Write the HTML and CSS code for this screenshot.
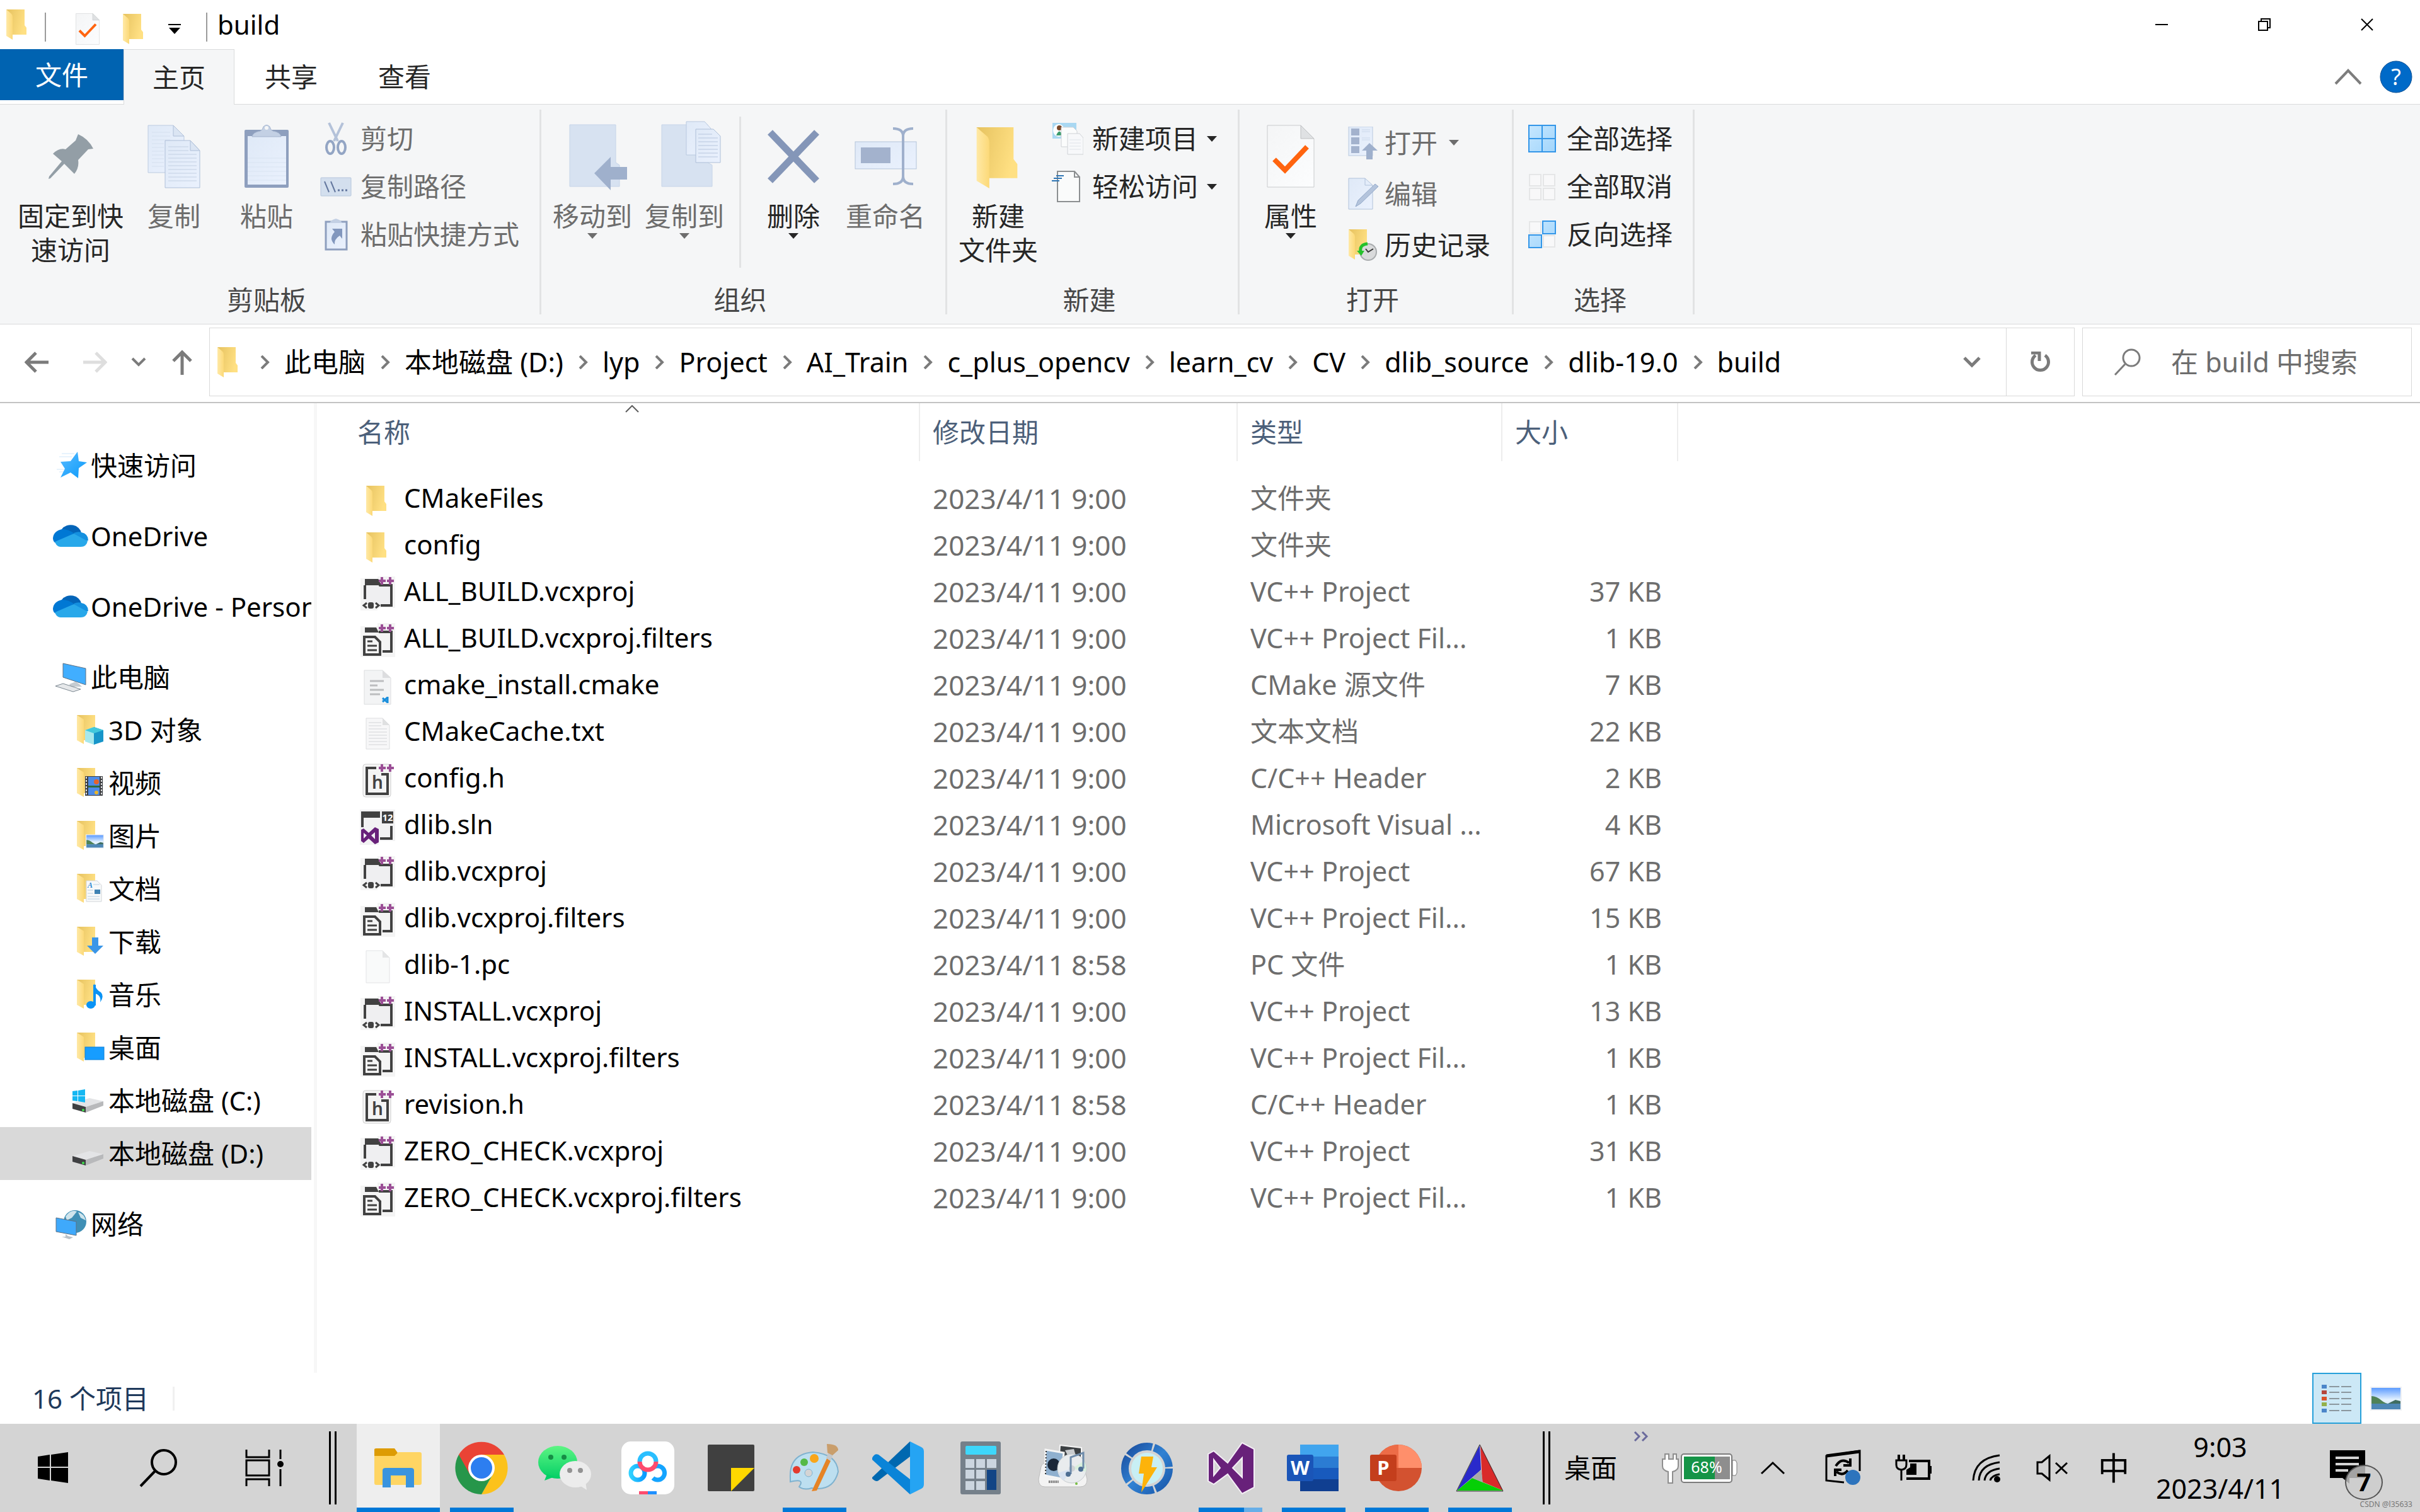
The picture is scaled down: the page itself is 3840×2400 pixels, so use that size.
FILE: index.html
```html
<!DOCTYPE html>
<html lang="zh-CN">
<head>
    <meta charset="UTF-8">
    <meta name="viewport" content="width=device-width, initial-scale=1.0">
    <title>build</title>
    <link rel="stylesheet" href="styles.css">
</head>
<body>
    <!-- shared icons -->
    <svg class="sprite" aria-hidden="true">
        <defs>
            <linearGradient id="g-folder" x1="0" y1="0" x2="1" y2="0.3">
                <stop offset="0" stop-color="#e6c25f"/><stop offset="1" stop-color="#ffe083"/>
            </linearGradient>
            <linearGradient id="g-leaf" x1="0" y1="0" x2="1" y2="0">
                <stop offset="0" stop-color="#ffe9a6"/><stop offset="1" stop-color="#fcd978"/>
            </linearGradient>
            <linearGradient id="g-paper" x1="0" y1="0" x2="1" y2="1">
                <stop offset="0" stop-color="#f4f5f6"/><stop offset="1" stop-color="#fcfdfe"/>
            </linearGradient>
            <linearGradient id="g-pale" x1="0" y1="0" x2="1" y2="1">
                <stop offset="0" stop-color="#dfe9f7"/><stop offset="1" stop-color="#eaf1fd"/>
            </linearGradient>
            <linearGradient id="g-sky" x1="0" y1="0" x2="0" y2="1">
                <stop offset="0" stop-color="#5c9bff"/><stop offset="0.55" stop-color="#e4f2ff"/><stop offset="1" stop-color="#cfe6f8"/>
            </linearGradient>
            <linearGradient id="g-blue" x1="0" y1="0" x2="1" y2="1">
                <stop offset="0" stop-color="#58baff"/><stop offset="1" stop-color="#0a9bfb"/>
            </linearGradient>
            <linearGradient id="g-cell" x1="0" y1="0" x2="1" y2="1">
                <stop offset="0" stop-color="#c6e7ff"/><stop offset="1" stop-color="#a2d5fb"/>
            </linearGradient>
            <linearGradient id="g-wechat" x1="0" y1="0" x2="0" y2="1">
                <stop offset="0" stop-color="#5df583"/><stop offset="1" stop-color="#04cf66"/>
            </linearGradient>
            <linearGradient id="g-baidu" x1="0" y1="0" x2="1" y2="0">
                <stop offset="0" stop-color="#2fd0ff"/><stop offset="1" stop-color="#0a9bff"/>
            </linearGradient>
            <linearGradient id="g-bolt" x1="0" y1="0" x2="1" y2="1">
                <stop offset="0" stop-color="#1a4d9e"/><stop offset="0.5" stop-color="#3182d3"/><stop offset="1" stop-color="#1a58ab"/>
            </linearGradient>
        </defs>

        <symbol id="folder" viewBox="0 0 32 48">
            <path d="M0 0H29V25L32 29V40H8Z" fill="url(#g-folder)"/>
            <path d="M0 0L7 6Q10 8 10 12V48L0 42Z" fill="url(#g-leaf)"/>
        </symbol>
        <symbol id="side-folder" viewBox="0 0 56 48">
            <path d="M10 0H39V40H18Z" fill="url(#g-folder)"/>
            <path d="M10 0L21 7V46L10 40Z" fill="url(#g-leaf)"/>
        </symbol>
        <symbol id="props" viewBox="0 0 76 100">
            <path d="M1 1H54L75 22V99H1Z" fill="url(#g-paper)" stroke="#c9cbcd" stroke-width="1"/>
            <path d="M54 1V22H75Z" fill="#dfe1e3" stroke="#bfc1c3" stroke-width="1"/>
            <path d="M12 55L29 72L64 35" fill="none" stroke="#ff640f" stroke-width="8"/>
        </symbol>
        <symbol id="caret" viewBox="0 0 16 9"><path d="M0 0H16L8 9Z" fill="currentColor"/></symbol>
        <symbol id="chev" viewBox="0 0 16 22"><path d="M3 1L13 11L3 21" fill="none" stroke="#7b7b7b" stroke-width="4"/></symbol>
        <symbol id="cloud" viewBox="0 0 56 48">
            <path d="M14 13A17 15 0 0 1 45 19L30 26Z" fill="#0364b8"/>
            <path d="M14 13Q22 12 33 19L16 36Q0 38 0 27Q1 16 14 13Z" fill="#0078d4"/>
            <path d="M33 19Q40 16 45 18Q56 20 56 31L40 34Z" fill="#1490df"/>
            <path d="M3 33L33 20L55 32Q53 41 44 41H12Q6 41 3 33Z" fill="#28a8ea"/>
        </symbol>
        <symbol id="disk" viewBox="0 0 56 48">
            <path d="M3 28L30 20L52 25L24 34Z" fill="#e3e4e6"/>
            <path d="M24 34L52 25V32L24 43Z" fill="#b8b9bb"/>
            <path d="M3 28L24 34V43L3 37Z" fill="#3f4042"/>
            <circle cx="20" cy="39" r="2" fill="#3fe04c"/>
        </symbol>
        <symbol id="plus2" viewBox="0 0 24 12">
            <path d="M0 6H11M5 0V12M13 6H24M18 0V12" stroke="#9b4f96" stroke-width="4" fill="none"/>
        </symbol>
        <symbol id="f-proj" viewBox="0 0 60 56">
            <path d="M1 3H28V0H56V50H28V54H1Z" fill="#f4f4f4"/>
            <path d="M10 14H52V44H10Z" fill="#efeff1"/>
            <path d="M8 6H28L32 14H50V46H33" fill="none" stroke="#414141" stroke-width="4"/>
            <path d="M8 6H28L30 14H8Z" fill="#414141"/>
            <path d="M8 14V36" stroke="#414141" stroke-width="4"/>
            <path d="M11 42L6 46L11 50M25 42L30 46L25 50" fill="none" stroke="#414141" stroke-width="3"/>
            <rect x="13" y="41" width="9" height="10" rx="3" fill="#414141"/>
            <use href="#plus2" x="30" y="1" width="24" height="12"/>
        </symbol>
        <symbol id="f-filter" viewBox="0 0 60 56">
            <path d="M1 5H28V0H56V54H1Z" fill="#f4f4f4"/>
            <path d="M8 7H26L30 15H8Z" fill="#414141"/>
            <path d="M30 14H50V45H36" fill="none" stroke="#414141" stroke-width="4"/>
            <path d="M7 22H24L32 30V50H7Z" fill="#f4f4f4" stroke="#414141" stroke-width="4"/>
            <path d="M12 29H20M12 36H27M12 43H27" stroke="#414141" stroke-width="3"/>
            <use href="#plus2" x="30" y="2" width="24" height="12"/>
        </symbol>
        <symbol id="f-header" viewBox="0 0 60 56">
            <rect x="5" y="2" width="44" height="52" rx="4" fill="#f4f4f4" stroke="#d0d0d0" stroke-width="1"/>
            <path d="M26 8H11V49H44V18H34" fill="none" stroke="#414141" stroke-width="4"/>
            <use href="#plus2" x="30" y="2" width="24" height="12"/>
        </symbol>
        <symbol id="f-sln" viewBox="0 0 60 56">
            <path d="M0 0H56V50H30V56H0Z" fill="#f2f2f3"/>
            <path d="M2 3H32V13H6V28H2Z" fill="#414141"/>
            <path d="M50 26V46H32" fill="none" stroke="#414141" stroke-width="4"/>
            <rect x="35" y="3" width="18" height="19" fill="#414141"/>
            <path fill-rule="evenodd" d="M2 32L6 30L14 37L24 28L30 31V52L24 55L14 46L6 53L2 50ZM6 37V46L11 41ZM24 36L18 41L24 47Z" fill="#68217a"/>
        </symbol>
        <symbol id="f-cmake" viewBox="0 0 60 56">
            <path d="M7 1H36L49 13V55H7Z" fill="#f3f4f5" stroke="#dcdddf" stroke-width="1"/>
            <path d="M36 1V13H49Z" fill="#dcdddf"/>
            <path d="M16 18H38M16 25H28M16 32H38M16 39H32" stroke="#bcbdbf" stroke-width="3"/>
            <path d="M44 44L36 51M36 45L44 52M44 43V53" fill="none" stroke="#1b8fdc" stroke-width="3"/>
        </symbol>
        <symbol id="f-txt" viewBox="0 0 60 56">
            <path d="M10 3H36L47 14V52H10Z" fill="#f7f7f8" stroke="#dcdddf" stroke-width="1"/>
            <path d="M36 3V14H47Z" fill="#dfe0e1"/>
            <path d="M14 10H34M14 15H34M14 20H43M14 25H43M14 30H43M14 35H43M14 40H43M14 45H43" stroke="#e5e6e8" stroke-width="2"/>
        </symbol>
        <symbol id="f-blank" viewBox="0 0 60 56">
            <path d="M10 2H36L47 13V53H10Z" fill="#f9fafa" stroke="#e2e3e5" stroke-width="1"/>
            <path d="M36 2V13H47Z" fill="#e4e5e6"/>
        </symbol>
        <symbol id="f-dir" viewBox="0 0 60 56"><use href="#folder" x="10" y="4" width="32" height="48"/></symbol>
        <symbol id="photo" viewBox="0 0 50 38">
            <rect x="0" y="0" width="50" height="38" fill="#eef0f3"/>
            <rect x="2" y="2" width="46" height="34" fill="url(#g-sky)"/>
            <path d="M2 15Q10 15 18 22T36 27H2Z" fill="#4f8257"/>
            <path d="M26 28L40 21L48 23V28Z" fill="#3f6d60"/>
            <rect x="2" y="27" width="46" height="9" fill="#4d87b5"/>
        </symbol>
        <symbol id="vs" viewBox="0 0 84 84">
            <path fill-rule="evenodd" d="M7 20L16 15L38 34L61 2L80 12V73L61 83L38 52L16 68L7 63ZM16 29V54L26 42ZM61 26L46 42L61 57Z" fill="#68217a" stroke="#f4eef6" stroke-width="2"/>
        </symbol>
    </svg>

    <header class="titlebar">
        <svg class="i-folder"><use href="#folder"/></svg>
        <span class="title-sep sep-first"></span>
        <button class="quick" aria-label="属性"><svg class="i-doc"><use href="#props"/></svg></button>
        <button class="quick" aria-label="新建文件夹"><svg class="i-folder"><use href="#folder"/></svg></button>
        <button class="quick quick-more" aria-label="自定义快速访问工具栏">
            <svg width="20" height="16" viewBox="0 0 20 16"><path d="M0 1H20" stroke="#000" stroke-width="2"/><path d="M1 6H19L10 16Z"/></svg>
        </button>
        <span class="title-sep sep-last"></span>
        <h1 class="title">build</h1>
        <div class="win-buttons">
            <button aria-label="最小化"><svg width="22" height="22" viewBox="0 0 22 22"><path d="M1 11H21" stroke="#000" stroke-width="2"/></svg></button>
            <button aria-label="还原"><svg width="22" height="22" viewBox="0 0 22 22"><path d="M2 6H16V20H2ZM6 6V2H20V16H16" fill="none" stroke="#000" stroke-width="2"/></svg></button>
            <button aria-label="关闭"><svg width="22" height="22" viewBox="0 0 22 22"><path d="M2 2L20 20M20 2L2 20" stroke="#000" stroke-width="2"/></svg></button>
        </div>
    </header>

    <nav class="tabs">
        <button class="tab tab-file">文件</button>
        <button class="tab tab-active">主页</button>
        <button class="tab">共享</button>
        <button class="tab">查看</button>
        <div class="tabs-right">
            <button aria-label="最小化功能区"><svg width="44" height="26" viewBox="0 0 44 26"><path d="M2 24L22 3L42 24" fill="none" stroke="#7d7d7d" stroke-width="4"/></svg></button>
            <button aria-label="帮助"><svg width="52" height="52" viewBox="0 0 52 52"><circle cx="26" cy="26" r="25" fill="#006ac8" stroke="#0a4f92" stroke-width="1"/><text x="26" y="39" class="ico-help">?</text></svg></button>
        </div>
    </nav>

    <section class="ribbon">
        <div class="group g-clip">
            <div class="group-body">
                <button class="big big-pin">
                    <svg class="big-ico" viewBox="0 0 100 104"><path d="M62 17Q78 24 86 40L78 41L62 58Q64 70 56 80L40 64L18 87L15 88L16 84L36 60L22 48Q32 38 42 41L58 27Z" fill="#939ea6"/></svg>
                    <span>固定到快<br>速访问</span>
                </button>
                <button class="big big-copy" disabled>
                    <svg class="big-ico" viewBox="0 0 100 104">
                        <path d="M9 3H49L66 20V78H9Z" fill="url(#g-pale)" stroke="#bccbe0" stroke-width="1"/>
                        <path d="M15 14H44M15 20H44M15 26H44M15 32H34M15 38H34M15 44H34M15 50H34M15 56H34M15 62H34M15 68H34" stroke="#d5e0ef" stroke-width="1"/>
                        <path d="M49 3V20H66Z" fill="#dbe5f3" stroke="#b0c0d8" stroke-width="1"/>
                        <path d="M36 27H76L91 43V102H36Z" fill="url(#g-pale)" stroke="#aebfd8" stroke-width="1"/>
                        <path d="M76 27V43H91Z" fill="#dbe5f3" stroke="#aebfd8" stroke-width="1"/>
                        <path d="M41 37H73M41 43H73M41 49H86M41 55H86M41 61H86M41 67H86M41 73H86M41 79H86M41 85H86M41 91H86" stroke="#c3d0e3" stroke-width="1"/>
                    </svg>
                    <span>复制</span>
                </button>
                <button class="big big-paste" disabled>
                    <svg class="big-ico" viewBox="0 0 100 104">
                        <rect x="15" y="10" width="70" height="92" rx="2" fill="#8e9fbe"/>
                        <rect x="20" y="20" width="61" height="77" fill="url(#g-pale)"/>
                        <path d="M20 55H81M20 62H81M20 69H81M20 76H81M20 83H81M20 90H81" stroke="#d9e4f2" stroke-width="1"/>
                        <path d="M27 21Q28 14 40 12Q44 10 45 5Q50 0 55 5Q56 10 60 12Q72 14 73 21Z" fill="#c3d0e4" stroke="#a5b5cf" stroke-width="1"/>
                        <circle cx="50" cy="7" r="3" fill="#f5f6f7"/>
                    </svg>
                    <span>粘贴</span>
                </button>
                <div class="col">
                    <button class="small" disabled>
                        <svg class="small-ico" viewBox="0 0 50 52"><path d="M14 1L28 30M36 1L22 30" stroke="#b4c2d9" stroke-width="4"/><ellipse cx="16" cy="40" rx="6" ry="10" fill="none" stroke="#93a5c4" stroke-width="4"/><ellipse cx="34" cy="40" rx="6" ry="10" fill="none" stroke="#93a5c4" stroke-width="4"/></svg>
                        剪切
                    </button>
                    <button class="small" disabled>
                        <svg class="small-ico" viewBox="0 0 50 52"><rect x="1" y="12" width="48" height="29" rx="1" fill="#d3dfee" stroke="#b6c6dc" stroke-width="1"/><path d="M7 18L14 35M17 18L24 35" stroke="#63779e" stroke-width="2"/><path d="M28 32H31M34 32H37M40 32H43" stroke="#63779e" stroke-width="3"/></svg>
                        复制路径
                    </button>
                    <button class="small" disabled>
                        <svg class="small-ico" viewBox="0 0 50 52"><rect x="9" y="6" width="33" height="44" fill="url(#g-pale)" stroke="#8e9fbe" stroke-width="3"/><path d="M15 8Q17 3 25 1Q33 3 35 8Z" fill="#c3d0e4"/><path d="M19 17H35V33L31 28Q22 34 23 42Q13 33 23 22Z" fill="#8297bd"/></svg>
                        粘贴快捷方式
                    </button>
                </div>
            </div>
            <div class="group-name">剪贴板</div>
        </div>

        <div class="group g-org">
            <div class="group-body">
                <button class="big" disabled>
                    <svg class="big-ico" viewBox="0 0 100 104">
                        <path d="M14 2H87V62L93 66V100H14Z" fill="#d7e2f1" stroke="#c6d4e8" stroke-width="1"/>
                        <path d="M79 53V69H105V89H79V106L53 79Z" fill="#9fb0cc"/>
                    </svg>
                    <span>移动到</span>
                    <svg class="i-caret"><use href="#caret"/></svg>
                </button>
                <button class="big" disabled>
                    <svg class="big-ico" viewBox="0 0 100 104">
                        <path d="M14 2H87V62L94 66V100H14Z" fill="#d7e2f1" stroke="#c6d4e8" stroke-width="1"/>
                        <path d="M53 -3H82L92 8V50H53Z" fill="url(#g-pale)" stroke="#b9c9df" stroke-width="1"/>
                        <path d="M68 9H96L107 20V62H68Z" fill="url(#g-pale)" stroke="#aebfd8" stroke-width="1"/>
                        <path d="M72 17H94M72 23H103M72 29H103M72 35H103M72 41H103M72 47H103M72 53H103" stroke="#b7c6de" stroke-width="1"/>
                    </svg>
                    <span>复制到</span>
                    <svg class="i-caret"><use href="#caret"/></svg>
                </button>
                <span class="inner-sep"></span>
                <button class="big">
                    <svg class="big-ico" viewBox="0 0 100 104"><path d="M13 14L87 91M87 14L13 91" stroke="#8496b8" stroke-width="11"/></svg>
                    <span>删除</span>
                    <svg class="i-caret"><use href="#caret"/></svg>
                </button>
                <button class="big" disabled>
                    <svg class="big-ico" viewBox="0 0 100 104">
                        <rect x="2" y="29" width="97" height="43" fill="url(#g-pale)" stroke="#b3c3da" stroke-width="1"/>
                        <rect x="11" y="38" width="47" height="25" fill="#a3b2cd"/>
                        <path d="M62 8Q78 8 78 20V84Q78 96 62 96M94 8Q78 8 78 20M78 84Q78 96 94 96" fill="none" stroke="#9fb0cc" stroke-width="4"/>
                    </svg>
                    <span>重命名</span>
                </button>
            </div>
            <div class="group-name">组织</div>
        </div>

        <div class="group g-new">
            <div class="group-body">
                <button class="big">
                    <svg class="big-ico" viewBox="0 0 100 104"><use href="#folder" x="15" y="6" width="66" height="97"/></svg>
                    <span>新建<br>文件夹</span>
                </button>
                <div class="col">
                    <button class="small">
                        <svg class="small-ico" viewBox="0 0 50 52"><rect x="1" y="1" width="38" height="25" fill="#a9d8f2"/><ellipse cx="11" cy="13" rx="9" ry="10" fill="#fff"/><circle cx="12" cy="9" r="4" fill="#7a4a2c"/><path d="M7 21Q12 8 17 21Z" fill="#3b9b6d"/><path d="M15 8H34L40 14V39H15Z" fill="#fbfcfc" stroke="#cfd2d6" stroke-width="1"/><path d="M25 18H44L50 25V51H25Z" fill="#f7f8fa" stroke="#cfd2d6" stroke-width="1"/><path d="M28 28H46M28 33H46M28 38H46M28 43H46" stroke="#dfe4ea" stroke-width="1"/></svg>
                        新建项目
                        <svg class="i-caret"><use href="#caret"/></svg>
                    </button>
                    <button class="small">
                        <svg class="small-ico" viewBox="0 0 50 52"><path d="M9 2H36L44 11V50H9Z" fill="#fafbfb" stroke="#8c8f91" stroke-width="2"/><path d="M36 2V11H44" fill="none" stroke="#8c8f91" stroke-width="2"/><path d="M7 9H19M3 13H16M0 17H12" stroke="#2f76b5" stroke-width="2"/></svg>
                        轻松访问
                        <svg class="i-caret"><use href="#caret"/></svg>
                    </button>
                </div>
            </div>
            <div class="group-name">新建</div>
        </div>

        <div class="group g-open">
            <div class="group-body">
                <button class="big">
                    <svg class="big-ico" viewBox="0 0 100 104"><use href="#props" x="12" y="2" width="76" height="100"/></svg>
                    <span>属性</span>
                    <svg class="i-caret"><use href="#caret"/></svg>
                </button>
                <div class="col col-open">
                    <button class="small" disabled>
                        <svg class="small-ico" viewBox="0 0 50 52"><rect x="3" y="0" width="38" height="46" fill="url(#g-pale)" stroke="#b9c9df" stroke-width="1"/><path d="M7 3H20V14H7ZM7 17H20V28H7ZM7 31H20V42H7Z" fill="#a3b2cd"/><path d="M24 5H37M24 8H37M24 18H37M24 21H37" stroke="#cbd8ea" stroke-width="1"/><path d="M36 26L49 38H41V52H31V38H24Z" fill="#9fb0cc"/></svg>
                        打开
                        <svg class="i-caret"><use href="#caret"/></svg>
                    </button>
                    <button class="small" disabled>
                        <svg class="small-ico" viewBox="0 0 50 52"><path d="M3 1H29L41 12V50H3Z" fill="url(#g-pale)" stroke="#b0c2da" stroke-width="1"/><path d="M29 1V12H41" fill="none" stroke="#b0c2da" stroke-width="1"/><path d="M14 46L18 36L45 10L50 14L22 41Z" fill="#b4c4dc" stroke="#93a9ca" stroke-width="1"/></svg>
                        编辑
                    </button>
                    <button class="small">
                        <svg class="small-ico" viewBox="0 0 50 52"><use href="#folder" x="3" y="1" width="32" height="48"/><circle cx="34" cy="37" r="13" fill="#d9dadb" stroke="#a9acae" stroke-width="2"/><path d="M30 32L34 37L42 32" fill="none" stroke="#333" stroke-width="2"/><path d="M33 24Q20 25 22 37" fill="none" stroke="#25c12b" stroke-width="5"/><path d="M16 35H28L23 43Z" fill="#25c12b"/></svg>
                        历史记录
                    </button>
                </div>
            </div>
            <div class="group-name">打开</div>
        </div>

        <div class="group g-select">
            <div class="group-body">
                <div class="col">
                    <button class="small">
                        <svg class="small-ico" viewBox="0 0 50 52"><path d="M4 5H25V26H4ZM25 5H46V26H25ZM4 26H25V47H4ZM25 26H46V47H25Z" fill="url(#g-cell)" stroke="#3396e8" stroke-width="2"/></svg>
                        全部选择
                    </button>
                    <button class="small">
                        <svg class="small-ico" viewBox="0 0 50 52"><path d="M5 7H23V25H5ZM27 7H45V25H27ZM5 29H23V47H5ZM27 29H45V47H27Z" fill="#f8f8f9" stroke="#e5e6e7" stroke-width="2"/></svg>
                        全部取消
                    </button>
                    <button class="small">
                        <svg class="small-ico" viewBox="0 0 50 52"><path d="M5 6H23V24H5ZM27 28H45V46H27Z" fill="#f8f8f9" stroke="#e5e6e7" stroke-width="2"/><path d="M26 5H46V25H26ZM4 27H24V47H4Z" fill="url(#g-cell)" stroke="#3396e8" stroke-width="2"/></svg>
                        反向选择
                    </button>
                </div>
            </div>
            <div class="group-name">选择</div>
        </div>
    </section>

    <nav class="address">
        <button class="nav-btn" aria-label="后退"><svg width="40" height="34" viewBox="0 0 40 34"><path d="M38 17H4M18 2L3 17L18 32" fill="none" stroke="#7b7b7b" stroke-width="5"/></svg></button>
        <button class="nav-btn" aria-label="前进"><svg width="40" height="34" viewBox="0 0 40 34"><path d="M2 17H36M22 2L37 17L22 32" fill="none" stroke="#dedede" stroke-width="5"/></svg></button>
        <button class="nav-btn nav-recent" aria-label="最近浏览的位置"><svg width="24" height="16" viewBox="0 0 24 16"><path d="M2 2L12 12L22 2" fill="none" stroke="#7b7b7b" stroke-width="4"/></svg></button>
        <button class="nav-btn" aria-label="上移"><svg width="34" height="40" viewBox="0 0 34 40"><path d="M17 40V4M3 18L17 4L31 18" fill="none" stroke="#7b7b7b" stroke-width="5"/></svg></button>
        <div class="path">
            <svg class="i-folder"><use href="#folder"/></svg>
            <ol class="crumbs">
                <li><svg class="i-chev"><use href="#chev"/></svg><a href="#">此电脑</a></li>
                <li><svg class="i-chev"><use href="#chev"/></svg><a href="#">本地磁盘 (D:)</a></li>
                <li><svg class="i-chev"><use href="#chev"/></svg><a href="#">lyp</a></li>
                <li><svg class="i-chev"><use href="#chev"/></svg><a href="#">Project</a></li>
                <li><svg class="i-chev"><use href="#chev"/></svg><a href="#">AI_Train</a></li>
                <li><svg class="i-chev"><use href="#chev"/></svg><a href="#">c_plus_opencv</a></li>
                <li><svg class="i-chev"><use href="#chev"/></svg><a href="#">learn_cv</a></li>
                <li><svg class="i-chev"><use href="#chev"/></svg><a href="#">CV</a></li>
                <li><svg class="i-chev"><use href="#chev"/></svg><a href="#">dlib_source</a></li>
                <li><svg class="i-chev"><use href="#chev"/></svg><a href="#">dlib-19.0</a></li>
                <li><svg class="i-chev"><use href="#chev"/></svg><a href="#">build</a></li>
            </ol>
            <button class="path-drop" aria-label="以前的位置"><svg width="28" height="18" viewBox="0 0 28 18"><path d="M2 2L14 14L26 2" fill="none" stroke="#7b7b7b" stroke-width="5"/></svg></button>
            <button class="path-refresh" aria-label="刷新"><svg width="34" height="34" viewBox="0 0 34 34"><path d="M24 6A13 13 0 1 1 9 6" fill="none" stroke="#7b7b7b" stroke-width="5"/><path d="M2 2H15V15" fill="none" stroke="#7b7b7b" stroke-width="5"/></svg></button>
        </div>
        <div class="search">
            <svg width="44" height="44" viewBox="0 0 44 44"><circle cx="28" cy="15" r="13" fill="none" stroke="#7b7b7b" stroke-width="3"/><path d="M18 25L2 42" stroke="#7b7b7b" stroke-width="3"/></svg>
            <input type="text" aria-label="搜索" placeholder="在 build 中搜索">
        </div>
    </nav>

    <main class="content">
        <aside class="sidebar">
            <ul class="tree">
                <li><a href="#"><svg class="i-side" viewBox="0 0 56 48"><path d="M14 5H34M10 10H30M6 30H20M10 34H18" stroke="#cfe6fa" stroke-width="1"/><path d="M39 2L41 17L54 19L41 28L40 44L28 35L12 43L19 29L12 18L28 17Z" fill="url(#g-blue)"/></svg>快速访问</a></li>
                <li class="gap"><a href="#"><svg class="i-side"><use href="#cloud"/></svg>OneDrive</a></li>
                <li class="gap"><a href="#"><svg class="i-side"><use href="#cloud"/></svg>OneDrive - Personal</a></li>
                <li class="gap"><a href="#"><svg class="i-side" viewBox="0 0 56 48"><path d="M16 2L52 10V36L16 24Z" fill="#41aeff" stroke="#5d7184" stroke-width="1"/><path d="M36 31L42 35L46 39H28L26 35Z" fill="#c6ccd1"/><path d="M4 38L16 34L44 43L32 47Z" fill="#e6e8ea" stroke="#7c8891" stroke-width="1"/></svg>此电脑</a></li>
                <li class="child"><a href="#"><svg class="i-side" viewBox="0 0 56 48"><use href="#side-folder"/><path d="M23 24L37 19V47L23 42Z" fill="#a7e8ec"/><path d="M37 19L52 24V42L37 47Z" fill="#1795c9"/><path d="M23 24L37 19L52 24L37 29Z" fill="#41c8dc"/></svg>3D 对象</a></li>
                <li class="child"><a href="#"><svg class="i-side" viewBox="0 0 56 48"><use href="#side-folder"/><rect x="23" y="13" width="28" height="31" fill="#3a3d42"/><rect x="28" y="14" width="18" height="29" fill="#4d8be8"/><circle cx="41" cy="22" r="4" fill="#e5622a"/><path d="M28 28H46V31H28Z" fill="#2f6b3c"/><circle cx="41" cy="39" r="3" fill="#e9b42c"/><path d="M25 14V44M49 14V44" stroke="#d9dadb" stroke-width="2" stroke-dasharray="3 2"/></svg>视频</a></li>
                <li class="child"><a href="#"><svg class="i-side" viewBox="0 0 56 48"><use href="#side-folder"/><use href="#photo" x="24" y="21" width="29" height="23"/></svg>图片</a></li>
                <li class="child"><a href="#"><svg class="i-side" viewBox="0 0 56 48"><use href="#side-folder"/><path d="M25 11H42L49 18V44H25Z" fill="#f8f9fa" stroke="#d3d6d9" stroke-width="1"/><text x="27" y="22" class="ico-a">A</text><path d="M36 17H46M27 26H36M27 31H36M27 36H46M27 40H46" stroke="#b9cfe2" stroke-width="1"/><rect x="38" y="25" width="9" height="7" fill="#3f82b4"/></svg>文档</a></li>
                <li class="child"><a href="#"><svg class="i-side" viewBox="0 0 56 48"><use href="#side-folder"/><path d="M34 17H44V30H52L39 43L26 30H34Z" fill="#3a96e8"/></svg>下载</a></li>
                <li class="child"><a href="#"><svg class="i-side" viewBox="0 0 56 48"><use href="#side-folder"/><ellipse cx="32" cy="40" rx="7" ry="6" fill="#0a93f5"/><path d="M38 41V8" stroke="#0a93f5" stroke-width="4"/><path d="M37 6Q41 17 48 20Q54 26 47 36Q49 25 39 22Z" fill="#0a93f5"/></svg>音乐</a></li>
                <li class="child"><a href="#"><svg class="i-side" viewBox="0 0 56 48"><use href="#side-folder"/><rect x="23" y="23" width="30" height="20" fill="#169dff" stroke="#0b7fd6" stroke-width="1"/></svg>桌面</a></li>
                <li class="child"><a href="#"><svg class="i-side" viewBox="0 0 56 48"><use href="#disk"/><path d="M3 9L11 8V16H3ZM12 8L23 6V16H12ZM3 17H11V25L3 24ZM12 17H23V27L12 25Z" fill="#16b7f2"/></svg>本地磁盘 (C:)</a></li>
                <li class="child current"><a href="#"><svg class="i-side"><use href="#disk"/></svg>本地磁盘 (D:)</a></li>
                <li class="gap"><a href="#"><svg class="i-side" viewBox="0 0 56 48"><circle cx="35" cy="20" r="18" fill="#3f8fb5"/><path d="M20 12Q28 0 38 4L30 14L22 18ZM40 5Q50 8 52 18L44 14Z" fill="#cfe4ec"/><path d="M5 14L37 20V42L5 36Z" fill="#3fa9fb" stroke="#5d7184" stroke-width="1"/><path d="M20 40V44L14 44L26 48L32 45L24 43Z" fill="#b8c1c8"/></svg>网络</a></li>
            </ul>
        </aside>

        <section class="files">
            <svg class="sort-mark" width="22" height="12" viewBox="0 0 22 12"><path d="M1 11L11 1L21 11" fill="none" stroke="#5d5d5d" stroke-width="2"/></svg>
            <table class="list">
                <colgroup><col class="c-name"><col class="c-date"><col class="c-type"><col class="c-size"></colgroup>
                <thead>
                    <tr><th>名称</th><th>修改日期</th><th>类型</th><th>大小</th></tr>
                </thead>
                <tbody>
                    <tr><td><svg class="i-file"><use href="#f-dir"/></svg>CMakeFiles</td><td>2023/4/11 9:00</td><td>文件夹</td><td></td></tr>
                    <tr><td><svg class="i-file"><use href="#f-dir"/></svg>config</td><td>2023/4/11 9:00</td><td>文件夹</td><td></td></tr>
                    <tr><td><svg class="i-file"><use href="#f-proj"/></svg>ALL_BUILD.vcxproj</td><td>2023/4/11 9:00</td><td>VC++ Project</td><td>37 KB</td></tr>
                    <tr><td><svg class="i-file"><use href="#f-filter"/></svg>ALL_BUILD.vcxproj.filters</td><td>2023/4/11 9:00</td><td>VC++ Project Fil...</td><td>1 KB</td></tr>
                    <tr><td><svg class="i-file"><use href="#f-cmake"/></svg>cmake_install.cmake</td><td>2023/4/11 9:00</td><td>CMake 源文件</td><td>7 KB</td></tr>
                    <tr><td><svg class="i-file"><use href="#f-txt"/></svg>CMakeCache.txt</td><td>2023/4/11 9:00</td><td>文本文档</td><td>22 KB</td></tr>
                    <tr><td><svg class="i-file" viewBox="0 0 60 56"><use href="#f-header"/><text x="19" y="41" class="ico-h">h</text></svg>config.h</td><td>2023/4/11 9:00</td><td>C/C++ Header</td><td>2 KB</td></tr>
                    <tr><td><svg class="i-file" viewBox="0 0 60 56"><use href="#f-sln"/><text x="44" y="18" class="ico-12">12</text></svg>dlib.sln</td><td>2023/4/11 9:00</td><td>Microsoft Visual ...</td><td>4 KB</td></tr>
                    <tr><td><svg class="i-file"><use href="#f-proj"/></svg>dlib.vcxproj</td><td>2023/4/11 9:00</td><td>VC++ Project</td><td>67 KB</td></tr>
                    <tr><td><svg class="i-file"><use href="#f-filter"/></svg>dlib.vcxproj.filters</td><td>2023/4/11 9:00</td><td>VC++ Project Fil...</td><td>15 KB</td></tr>
                    <tr><td><svg class="i-file"><use href="#f-blank"/></svg>dlib-1.pc</td><td>2023/4/11 8:58</td><td>PC 文件</td><td>1 KB</td></tr>
                    <tr><td><svg class="i-file"><use href="#f-proj"/></svg>INSTALL.vcxproj</td><td>2023/4/11 9:00</td><td>VC++ Project</td><td>13 KB</td></tr>
                    <tr><td><svg class="i-file"><use href="#f-filter"/></svg>INSTALL.vcxproj.filters</td><td>2023/4/11 9:00</td><td>VC++ Project Fil...</td><td>1 KB</td></tr>
                    <tr><td><svg class="i-file" viewBox="0 0 60 56"><use href="#f-header"/><text x="19" y="41" class="ico-h">h</text></svg>revision.h</td><td>2023/4/11 8:58</td><td>C/C++ Header</td><td>1 KB</td></tr>
                    <tr><td><svg class="i-file"><use href="#f-proj"/></svg>ZERO_CHECK.vcxproj</td><td>2023/4/11 9:00</td><td>VC++ Project</td><td>31 KB</td></tr>
                    <tr><td><svg class="i-file"><use href="#f-filter"/></svg>ZERO_CHECK.vcxproj.filters</td><td>2023/4/11 9:00</td><td>VC++ Project Fil...</td><td>1 KB</td></tr>
                </tbody>
            </table>
        </section>
    </main>

    <footer class="status">
        <span class="count">16 个项目</span>
        <div class="views">
            <button class="view view-on" aria-label="详细信息">
                <svg width="50" height="50" viewBox="0 0 50 50"><path d="M1 3H9V9H1Z" fill="#4b86c9"/><path d="M1 12H9V18H1Z" fill="#b5473d"/><path d="M1 22H9V28H1Z" fill="#d9532c"/><path d="M1 31H9V37H1Z" fill="#93b04a"/><path d="M1 41H9V47H1Z" fill="#4b86c9"/><path d="M13 6H29M32 6H48M13 15H29M32 15H48M13 25H29M32 25H48M13 34H29M32 34H48M13 44H29M32 44H48" stroke="#8b979e" stroke-width="2"/></svg>
            </button>
            <button class="view" aria-label="大缩略图"><svg width="50" height="38"><use href="#photo"/></svg></button>
        </div>
    </footer>

    <div class="taskbar">
        <button class="sys" aria-label="开始"><svg width="50" height="50" viewBox="0 0 50 50"><path d="M1 7L20 4V23H1ZM22 4L49 0V23H22ZM1 25H20V45L1 42ZM22 25H49V49L22 45Z"/></svg></button>
        <button class="sys" aria-label="搜索"><svg width="62" height="62" viewBox="0 0 62 62"><circle cx="39" cy="22" r="19" fill="none" stroke="#000" stroke-width="4"/><path d="M25 36L2 60" stroke="#000" stroke-width="4"/></svg></button>
        <button class="sys" aria-label="任务视图"><svg width="62" height="58" viewBox="0 0 62 58"><path d="M2 0V12H38V0M2 58V47H38V58M2 17H38V41H2ZM56 0V15M56 31V58" fill="none" stroke="#000" stroke-width="3"/><circle cx="56" cy="23" r="5"/></svg></button>
        <span class="grip"></span>

        <div class="apps">
            <button class="app app-current running" aria-label="文件资源管理器"><svg class="i-app" viewBox="0 0 84 84"><path d="M4 13Q4 11 7 11H36L41 18L37 26H4Z" fill="#dd9b03"/><path d="M4 23H36L42 17H76Q79 17 79 20V66Q79 69 76 69H7Q4 69 4 66Z" fill="#ffd563"/><path d="M17 73V46Q17 42 22 42H62Q67 42 67 46V73H54V54H30V73Z" fill="#3a94de"/></svg></button>
            <button class="app running" aria-label="Google Chrome"><svg class="i-app" viewBox="0 0 84 84"><path d="M42 42L6 21A42 42 0 0 1 78 21Z" fill="#ea4335"/><path d="M42 42L42 84A42 42 0 0 1 6 21Z" fill="#26964a"/><path d="M42 42L42 21H78A42 42 0 0 1 42 84L60 52Z" fill="#fcc21b"/><path d="M42 84L60 52L42 42L24 52Z" fill="#26964a"/><path d="M6 21L24 53L42 42L42 21Z" fill="#ea4335"/><circle cx="42" cy="42" r="21" fill="#fff"/><circle cx="42" cy="42" r="17" fill="#2d7ef0"/></svg></button>
            <button class="app" aria-label="微信"><svg class="i-app" viewBox="0 0 84 84"><ellipse cx="31" cy="33" rx="31" ry="26" fill="url(#g-wechat)"/><path d="M14 52L10 62L26 56Z" fill="#04cf66"/><ellipse cx="59" cy="52" rx="25" ry="21" fill="#ececec"/><path d="M66 70L77 77L75 64Z" fill="#ececec"/><circle cx="20" cy="25" r="4" fill="#168d45"/><circle cx="41" cy="25" r="4" fill="#168d45"/><circle cx="50" cy="46" r="4" fill="#929292"/><circle cx="67" cy="46" r="4" fill="#929292"/></svg></button>
            <button class="app" aria-label="百度网盘"><svg class="i-app" viewBox="0 0 84 84"><rect width="84" height="84" rx="15" fill="#fff"/><circle cx="26" cy="50" r="11" fill="none" stroke="url(#g-baidu)" stroke-width="7"/><path d="M50 42A11 11 0 1 1 50 58" fill="none" stroke="#14a4ff" stroke-width="7"/><path d="M29 32A13 13 0 0 1 55 32" fill="none" stroke="#2abfff" stroke-width="7"/><path d="M29 32A13 13 0 0 0 55 32" fill="none" stroke="#ff4b6e" stroke-width="7"/><path d="M28 79H42V84H28Z" fill="#ff4b6e"/><path d="M42 79H56V84H42Z" fill="#1e90ff"/></svg></button>
            <button class="app" aria-label="便笺"><svg class="i-app" viewBox="0 0 84 84"><rect x="5" y="5" width="74" height="74" rx="2" fill="#404040"/><path d="M42 42H79L42 79Z" fill="#ffd800"/></svg></button>
            <button class="app running" aria-label="画图"><svg class="i-app" viewBox="0 0 84 84"><path d="M4 58Q2 20 40 17Q78 20 80 48Q72 80 38 74Q26 78 18 72Q28 58 4 64Z" fill="#bddff0" stroke="#7fb2cf" stroke-width="2"/><ellipse cx="33" cy="50" rx="6" ry="6" fill="#d4d4d4" stroke="#7fb2cf" stroke-width="1"/><circle cx="14" cy="45" r="6" fill="#e33b2e"/><circle cx="26" cy="33" r="6" fill="#55b947"/><circle cx="42" cy="27" r="7" fill="#f9a61a"/><path d="M62 27L68 31L46 78L38 79Z" fill="#e58426"/><path d="M61 26L65 17L72 20L68 31Z" fill="#c3c7cb"/><path d="M62 4Q80 4 80 14L71 22L63 18Z" fill="#c99e6c"/></svg></button>
            <button class="app" aria-label="Visual Studio Code"><svg class="i-app" viewBox="0 0 84 84"><path d="M2 57L62 0V24L12 62Q8 65 2 59Z" fill="#0068b0"/><path d="M2 26Q6 18 12 21L62 60V84L2 29Z" fill="#0a84d8"/><path d="M62 0L80 9Q84 11 84 16V68Q84 73 80 75L62 84Z" fill="#25a4f3"/></svg></button>
            <button class="app" aria-label="计算器"><svg class="i-app" viewBox="0 0 84 84"><rect x="10" y="0" width="64" height="84" rx="3" fill="#75808a"/><rect x="18" y="7" width="49" height="14" rx="2" fill="#3ed7fb"/><path d="M18 28H32V42H18ZM35 28H49V42H35ZM52 28H67V42H52ZM18 45H32V59H18ZM35 45H49V59H35ZM18 63H32V77H18ZM35 63H49V77H35Z" fill="#cbd5df"/><rect x="52" y="45" width="15" height="32" fill="#124585"/></svg></button>
            <button class="app" aria-label="媒体"><svg class="i-app" viewBox="0 0 84 84"><path d="M2 60L6 40Q8 34 14 34H66Q72 34 74 40L79 60Q79 72 68 72H12Q2 72 2 60Z" fill="#f3f3f3" stroke="#bdbdbd" stroke-width="1"/><path d="M36 6L70 10V36H34Z" fill="#3c4043" stroke="#f5f5f5" stroke-width="2"/><path d="M44 14L58 12L62 26H50Z" fill="#c9cccf"/><path d="M13 13L42 18L38 59L12 54Z" fill="#8fb0cf" stroke="#f5f5f5" stroke-width="3"/><path d="M14 15L13 53" stroke="#333" stroke-width="2" stroke-dasharray="2 3"/><circle cx="26" cy="37" r="10" fill="#1a2738"/><circle cx="55" cy="43" r="23" fill="#e9ecee" stroke="#c5cacd" stroke-width="1"/><path d="M55 43L74 31A23 23 0 0 1 77 48Z" fill="#d8efdc"/><path d="M55 43L42 62A23 23 0 0 1 33 50Z" fill="#d7e2f1"/><circle cx="55" cy="43" r="5" fill="#cfd3d6"/><path d="M53 52V25L73 18V43" fill="none" stroke="#6f8cab" stroke-width="3"/><circle cx="49" cy="52" r="4" fill="#4d6e93"/><circle cx="69" cy="44" r="4" fill="#4d6e93"/><path d="M18 64H34" stroke="#777" stroke-width="4" stroke-dasharray="2 1"/><circle cx="62" cy="67" r="2" fill="#76bd43"/></svg></button>
            <button class="app" aria-label="迅捷工具"><svg class="i-app" viewBox="0 0 84 84"><circle cx="42" cy="43" r="35" fill="none" stroke="url(#g-bolt)" stroke-width="12" stroke-dasharray="41 3"/><circle cx="42" cy="43" r="25" fill="#c8eff4"/><path d="M33 24H52L49 41H58L33 81L37 51H29Z" fill="#fdb30a"/></svg></button>
            <button class="app running stacked" aria-label="Visual Studio"><svg class="i-app"><use href="#vs"/></svg></button>
            <button class="app running" aria-label="Word"><svg class="i-app" viewBox="0 0 84 84"><path d="M21 5H82V24H21Z" fill="#41a5ee"/><path d="M21 24H82V42H21Z" fill="#2b7cd3"/><path d="M21 42H82V60H21Z" fill="#185abd"/><path d="M21 60H82V79H21Z" fill="#103f91"/><rect x="0" y="21" width="42" height="42" rx="3" fill="#1a55b8"/><text x="21" y="53" class="ico-office">W</text></svg></button>
            <button class="app running" aria-label="PowerPoint"><svg class="i-app" viewBox="0 0 84 84"><circle cx="45" cy="42" r="37" fill="#d35230"/><path d="M8 42A37 37 0 0 1 45 5V42Z" fill="#ed6c47"/><path d="M45 5A37 37 0 0 1 82 42H45Z" fill="#ff8f6b"/><rect x="0" y="21" width="42" height="42" rx="3" fill="#c43e1c"/><text x="21" y="53" class="ico-office">P</text></svg></button>
            <button class="app running" aria-label="CMake"><svg class="i-app" viewBox="0 0 84 84"><path d="M42 6L44 45L6 78Z" fill="#2a2acb"/><path d="M43 6L79 78L46 64Z" fill="#d92a2a"/><path d="M6 78L30 58L79 78Z" fill="#06cf06"/><path d="M44 45L47 65L30 58Z" fill="#a9a9a9"/><path d="M42 5L79 79H5Z" fill="none" stroke="#333" stroke-width="1"/></svg></button>
        </div>
        <span class="grip"></span>

        <div class="tray">
            <button class="desk">桌面</button>
            <button class="more" aria-label="更多"><svg width="24" height="16" viewBox="0 0 24 16"><path d="M2 1L9 8L2 15M14 1L21 8L14 15" fill="none" stroke="#6a6a9c" stroke-width="3"/></svg></button>
            <svg class="battery" viewBox="0 0 120 50"><path d="M5 3V11H1V22Q1 29 10 31V49H17V31Q26 29 26 22V11H23V3H18V11H11V3Z" fill="#fff" stroke="#8e8e8e" stroke-width="2"/><rect x="31" y="3" width="80" height="45" rx="4" fill="#fff" stroke="#7b7b7b" stroke-width="2"/><path d="M112 13H117L119 17V33L117 37H112Z" fill="#fff" stroke="#7b7b7b" stroke-width="1"/><rect x="35" y="7" width="73" height="36" fill="#8e8e8e"/><rect x="35" y="7" width="49" height="36" fill="#159447"/><text x="71" y="33" class="ico-power">68%</text></svg>
            <button class="cell" aria-label="显示隐藏的图标"><svg width="40" height="22" viewBox="0 0 40 22"><path d="M2 20L20 3L38 20" fill="none" stroke="#000" stroke-width="3"/></svg></button>
            <button class="cell" aria-label="更新"><svg width="58" height="58" viewBox="0 0 58 58"><path d="M30 52L2 49V10L55 2V34" fill="none" stroke="#000" stroke-width="3"/><path d="M2 10L55 3" stroke="#000" stroke-width="5"/><path d="M17 26Q26 12 38 21M40 14V25H29M36 33Q28 43 18 35M16 42V32H26" fill="none" stroke="#000" stroke-width="4"/><circle cx="44" cy="44" r="12" fill="#2d74bd"/></svg></button>
            <button class="cell" aria-label="电源"><svg width="60" height="42" viewBox="0 0 60 42"><path d="M22 10H54V38H18M56 18V30" fill="none" stroke="#000" stroke-width="4"/><path d="M24 14H34V32H18V24L24 20Z"/><path d="M10 24V41" stroke="#000" stroke-width="3"/><path d="M6 0V8M14 0V8" stroke="#000" stroke-width="4"/><path d="M2 9H18V16Q18 23 10 24Q2 23 2 16Z" fill="#d4d4d4" stroke="#000" stroke-width="3"/></svg></button>
            <button class="cell" aria-label="网络"><svg width="52" height="46" viewBox="0 0 52 46"><path d="M8 43Q10 8 50 3M17 43Q18 18 50 14M26 43Q28 27 50 24M35 43Q37 35 50 33" fill="none" stroke="#000" stroke-width="3"/><circle cx="46" cy="41" r="5"/></svg></button>
            <button class="cell cell-vol" aria-label="音量"><svg width="52" height="44" viewBox="0 0 52 44"><path d="M2 13H9L21 3V41L9 31H2Z" fill="none" stroke="#000" stroke-width="3"/><path d="M31 14L49 31M49 14L31 31" stroke="#000" stroke-width="3"/></svg></button>
            <button class="ime">中</button>
            <button class="clock"><time>9:03</time><time>2023/4/11</time></button>
            <button class="notice" aria-label="7 条新通知">
                <svg width="60" height="54" viewBox="0 0 60 54"><path d="M1 1H57V45H32V54L21 45H1Z"/><path d="M10 13H47M10 23H47M10 33H30" stroke="#d4d4d4" stroke-width="4"/></svg>
                <span class="badge">7</span>
            </button>
            <span class="watermark">CSDN @l35633</span>
        </div>
    </div>
</body>
</html>
```
FILE: styles.css
```css
* {
    box-sizing: border-box;
}

body {
    margin: 0;
    min-height: 100vh;
    display: flex;
    flex-direction: column;
    background: #fff;
    color: #000;
    font-family: "Noto Sans", "Noto Sans CJK SC", sans-serif;
    font-size: 42px;
    line-height: 54px;
}

button {
    padding: 0;
    border: 0;
    background: none;
    font: inherit;
    color: inherit;
    white-space: nowrap;
}

svg {
    display: block;
    flex: none;
}

.sprite {
    position: absolute;
    width: 0;
    height: 0;
}

.i-folder {
    width: 32px;
    height: 48px;
}

.i-doc {
    width: 38px;
    height: 50px;
}

.i-caret {
    width: 16px;
    height: 9px;
}

/* Title bar */
.titlebar {
    height: 78px;
    display: flex;
    align-items: center;
    padding-left: 10px;
}

.title-sep {
    width: 2px;
    height: 46px;
    background: #9b9b9b;
}

.sep-first {
    margin: 8px 30px 0 29px;
}

.sep-last {
    margin: 8px 16px 0 20px;
}

.quick {
    width: 72px;
    padding-top: 14px;
    display: flex;
    justify-content: center;
}

.quick-more {
    width: 60px;
}

.title {
    margin: 0;
    font-size: 42px;
    font-weight: normal;
}

.win-buttons {
    margin-left: auto;
    display: flex;
    align-self: stretch;
    padding-right: 3px;
}

.win-buttons button {
    width: 163px;
    display: flex;
    align-items: center;
    justify-content: center;
}

/* Tabs */
.tabs {
    height: 88px;
    display: flex;
    border-bottom: 1px solid #dadbdc;
}

.tab {
    width: 180px;
    color: #262626;
}

.tab-file {
    width: 196px;
    height: 81px;
    background: #0063b1;
    color: #fff;
}

.tab-active {
    width: 176px;
    height: 88px;
    background: #f5f6f7;
    border: 1px solid #dadbdc;
    border-bottom: 0;
}

.tabs-right {
    margin-left: auto;
    display: flex;
    align-items: center;
    gap: 28px;
    padding-right: 12px;
}

/* Ribbon */
.ribbon {
    display: flex;
    height: 349px;
    padding: 8px 0 15px;
    background: #f5f6f7;
    border-bottom: 1px solid #dadbdc;
    color: #262626;
}

.group {
    display: flex;
    flex-direction: column;
    border-right: 3px solid #e2e3e4;
}

.group-body {
    flex: 1;
    display: flex;
    align-items: flex-start;
    padding-left: 8px;
}

.group-name {
    padding-right: 10px;
    text-align: center;
    line-height: 46px;
    color: #474747;
}

.g-clip {
    width: 859px;
}

.g-clip .group-body {
    padding-left: 16px;
}

.g-org {
    width: 644px;
}

.g-new {
    width: 464px;
}

.g-open {
    width: 435px;
}

.g-select {
    width: 287px;
}

.g-select .group-body {
    padding-left: 20px;
}

.big {
    width: 146px;
    padding-top: 22px;
    display: flex;
    flex-direction: column;
    align-items: center;
}

.big span {
    margin-top: 16px;
}

.big-ico {
    width: 100px;
    height: 104px;
    overflow: visible;
}

.big-pin {
    width: 192px;
}

.big-copy {
    width: 136px;
}

.big-paste {
    width: 158px;
}

.big:disabled,
.small:disabled {
    color: #6d6d6d;
}

.inner-sep {
    width: 3px;
    height: 240px;
    margin: 11px 10px 0 14px;
    background: #e2e3e4;
}

.col {
    padding: 8px 0 0 6px;
    display: flex;
    flex-direction: column;
}

.g-new .col {
    padding-left: 12px;
}

.g-select .col {
    padding-left: 0;
}

.col-open {
    padding-top: 12px;
    padding-left: 16px;
}

.small {
    height: 76px;
    display: flex;
    align-items: center;
    gap: 14px;
}

.col-open .small {
    height: 81px;
    gap: 10px;
}

.small-ico {
    width: 50px;
    height: 52px;
}

.col-open .i-caret {
    margin-left: 8px;
}

/* Address bar */
.address {
    display: flex;
    height: 125px;
    padding: 5px 13px 9px;
    border-bottom: 2px solid #c3c3c3;
    font-size: 43px;
}

.nav-btn {
    width: 91px;
    display: flex;
    align-items: center;
    justify-content: center;
}

.nav-recent {
    width: 50px;
}

.nav-recent + .nav-btn {
    width: 87px;
}

.path {
    flex: 1;
    display: flex;
    align-items: center;
    border: 1px solid #d9d9d9;
    padding-left: 12px;
}

.crumbs {
    display: flex;
    flex: 1;
    margin: 0;
    padding: 0 0 0 12px;
    list-style: none;
}

.crumbs li {
    display: flex;
    align-items: center;
    white-space: nowrap;
}

.crumbs a,
.tree a {
    color: #000;
    text-decoration: none;
}

.i-chev {
    width: 16px;
    height: 22px;
    margin: 0 23px;
}

.path-drop,
.path-refresh {
    align-self: stretch;
    width: 108px;
    display: flex;
    align-items: center;
    justify-content: center;
}

.path-refresh {
    border-left: 1px solid #d9d9d9;
}

.search {
    width: 523px;
    margin-left: 12px;
    padding: 0 20px 0 49px;
    display: flex;
    align-items: center;
    gap: 47px;
    border: 1px solid #d9d9d9;
}

.search input {
    flex: 1;
    min-width: 0;
    padding: 0;
    border: 0;
    font: inherit;
    color: #000;
}

.search input::placeholder {
    color: #6d6d6d;
    opacity: 1;
}

/* Main area */
.content {
    flex: 1;
    display: flex;
}

.sidebar {
    width: 503px;
    padding: 57px 4px 0 0;
    border-right: 5px solid #f7f7f7;
}

.tree {
    margin: 0;
    padding: 0;
    list-style: none;
    overflow: hidden;
}

.tree a {
    height: 84px;
    display: flex;
    align-items: center;
    gap: 4px;
    padding-left: 84px;
    white-space: nowrap;
}

.tree .gap {
    margin-top: 28px;
}

.tree .child a {
    padding-left: 112px;
}

.tree .current {
    background: #d9d9d9;
}

.i-side {
    width: 56px;
    height: 48px;
}

.files {
    flex: 1;
    position: relative;
}

/* Sort arrow sits on top of the name column */
.sort-mark {
    position: absolute;
    top: 3px;
    left: 489px;
}

.list {
    table-layout: fixed;
    width: 2160px;
    border-collapse: separate;
    border-spacing: 0;
}

.c-name { width: 957px; }
.c-date { width: 504px; }
.c-type { width: 420px; }
.c-size { width: 279px; }

.list th {
    height: 92px;
    padding: 0 0 0 20px;
    border-right: 2px solid #ededed;
    text-align: left;
    font-weight: normal;
    color: #4c607a;
}

.list th:first-child {
    padding-left: 64px;
}

.list tbody::before {
    content: "";
    display: block;
    height: 22px;
}

.list td {
    height: 74px;
    padding: 0 0 0 20px;
    font-size: 43px;
    color: #6d6d6d;
    white-space: nowrap;
}

.list td:first-child {
    padding-left: 68px;
    font-size: 42px;
    color: #000;
}

.list td:nth-child(2) {
    font-size: 44px;
}

.list td:last-child {
    padding-right: 26px;
    text-align: right;
}

.i-file {
    display: inline-block;
    width: 60px;
    height: 56px;
    margin: -8px 10px -4px 0;
    vertical-align: -13px;
}

/* Status bar */
.status {
    height: 81px;
    display: flex;
    align-items: center;
    padding-left: 51px;
    color: #1e395b;
}

.count {
    line-height: 38px;
    padding-right: 38px;
    border-right: 3px solid #f0f0f0;
}

.views {
    margin-left: auto;
    align-self: stretch;
    display: flex;
    padding-right: 15px;
}

.view {
    width: 78px;
    display: flex;
    align-items: center;
    justify-content: center;
}

.view-on {
    background: #cce8f6;
    border: 2px solid #26a0da;
}

/* Taskbar */
.taskbar {
    height: 140px;
    display: flex;
    background: #d4d4d4;
}

.sys {
    width: 168px;
    display: flex;
    align-items: center;
    justify-content: center;
}

.grip {
    width: 12px;
    height: 116px;
    margin-top: 12px;
    border: solid #000;
    border-width: 0 3px;
}

.sys + .grip {
    margin-left: 18px;
    margin-right: 32px;
}

.apps {
    display: flex;
    margin-right: 34px;
}

.app {
    width: 132px;
    display: flex;
    flex-direction: column;
    align-items: center;
    padding-top: 28px;
}

.running::after {
    content: "";
    width: 101px;
    height: 7px;
    margin-top: auto;
    background: #0078d7;
}

.stacked::after {
    background: linear-gradient(to right, #0078d7 72px, #68afe8 72px);
}

.app-current {
    background: #eee;
}

.app-current::after {
    width: 132px;
}

.i-app {
    width: 84px;
    height: 84px;
}

.tray {
    flex: 1;
    display: flex;
    align-items: center;
    position: relative;
    padding-left: 22px;
}

.more {
    align-self: flex-start;
    margin: 12px 21px 0 26px;
}

.battery {
    width: 120px;
    height: 50px;
}

.cell {
    width: 112px;
    display: flex;
    justify-content: center;
}

.cell-vol {
    width: 104px;
}

.ime {
    width: 90px;
    font-size: 50px;
}

.clock {
    width: 248px;
    display: flex;
    flex-direction: column;
    align-items: center;
    gap: 12px;
    font-size: 43px;
}

.notice {
    position: relative;
    margin-left: 49px;
    padding-bottom: 4px;
}

.badge {
    position: absolute;
    left: 25px;
    top: 24px;
    width: 60px;
    height: 56px;
    border: 2px solid #555;
    border-radius: 50%;
    background: #cccccccc;
    font-size: 40px;
    font-weight: bold;
    line-height: 50px;
    text-align: center;
}

.watermark {
    position: absolute;
    right: 12px;
    bottom: 4px;
    font-size: 12px;
    line-height: 16px;
    color: #777;
}

/* Lettering inside icons */
.ico-h {
    font-size: 28px;
    font-weight: 600;
    fill: #414141;
}

.ico-12 {
    font-size: 15px;
    font-weight: bold;
    fill: #fff;
    text-anchor: middle;
}

.ico-help {
    font-size: 36px;
    fill: #fff;
    text-anchor: middle;
}

.ico-a {
    font: italic bold 12px "Liberation Serif", serif;
    fill: #2a86d1;
}

.ico-office {
    font-size: 31px;
    font-weight: bold;
    fill: #fff;
    text-anchor: middle;
}

.ico-power {
    font-size: 25px;
    fill: #fff;
    text-anchor: middle;
}
```
